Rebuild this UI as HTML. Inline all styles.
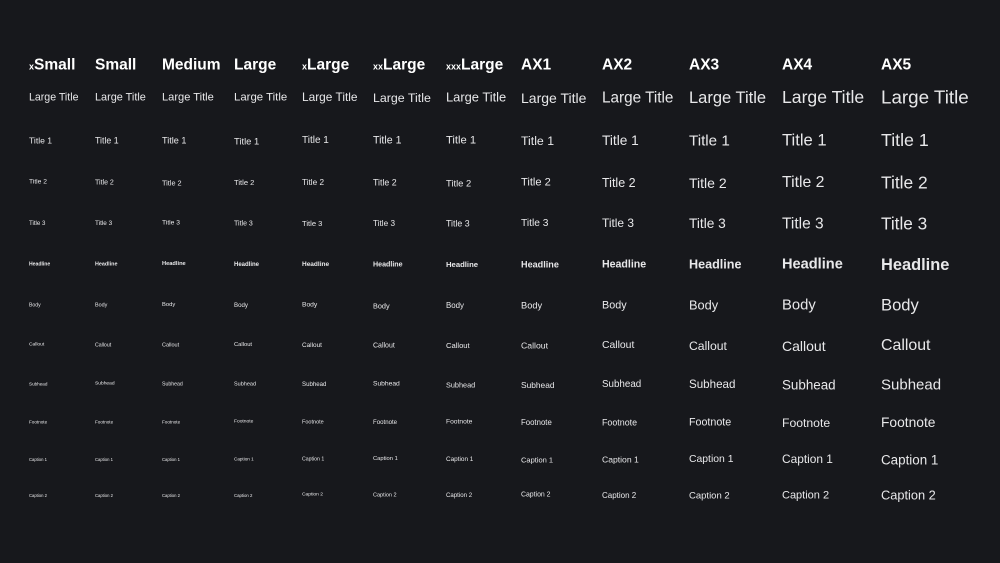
<!DOCTYPE html>
<html><head><meta charset="utf-8"><style>
html,body{margin:0;padding:0}
body{width:1000px;height:563px;background:#17181c;position:relative;overflow:hidden;font-family:"Liberation Sans",sans-serif;color:#e8e8ea}
.c{position:absolute;top:1px}
.c div{position:absolute;left:0;white-space:nowrap;line-height:1;transform:translateY(-50%)}
.h{top:64px;font-weight:bold;font-size:15.5px;color:#fff}
.h small{font-size:9px}
.r1{top:97px}.r2{top:140px}.r3{top:182px}.r4{top:223px}.r5{top:264px;font-weight:bold}.r6{top:305px}.r7{top:345px}.r8{top:384px}.r9{top:422px}.r10{top:459px}.r11{top:495px}
</style></head><body>
<div class="c" style="left:29px">
<div class="h"><small>x</small>Small</div>
<div class="r1" style="font-size:10.6px">Large Title</div>
<div class="r2" style="font-size:8.6px">Title 1</div>
<div class="r3" style="font-size:6.7px">Title 2</div>
<div class="r4" style="font-size:6.1px">Title 3</div>
<div class="r5" style="font-size:5.1px">Headline</div>
<div class="r6" style="font-size:5.1px">Body</div>
<div class="r7" style="font-size:4.9px">Callout</div>
<div class="r8" style="font-size:4.6px">Subhead</div>
<div class="r9" style="font-size:4.6px">Footnote</div>
<div class="r10" style="font-size:4.2px">Caption 1</div>
<div class="r11" style="font-size:4.2px">Caption 2</div>
</div>
<div class="c" style="left:95px">
<div class="h">Small</div>
<div class="r1" style="font-size:10.9px">Large Title</div>
<div class="r2" style="font-size:8.8px">Title 1</div>
<div class="r3" style="font-size:7px">Title 2</div>
<div class="r4" style="font-size:6.4px">Title 3</div>
<div class="r5" style="font-size:5.4px">Headline</div>
<div class="r6" style="font-size:5.4px">Body</div>
<div class="r7" style="font-size:5.2px">Callout</div>
<div class="r8" style="font-size:4.9px">Subhead</div>
<div class="r9" style="font-size:4.6px">Footnote</div>
<div class="r10" style="font-size:4.2px">Caption 1</div>
<div class="r11" style="font-size:4.2px">Caption 2</div>
</div>
<div class="c" style="left:162px">
<div class="h">Medium</div>
<div class="r1" style="font-size:11.1px">Large Title</div>
<div class="r2" style="font-size:9.1px">Title 1</div>
<div class="r3" style="font-size:7.3px">Title 2</div>
<div class="r4" style="font-size:6.7px">Title 3</div>
<div class="r5" style="font-size:5.7px">Headline</div>
<div class="r6" style="font-size:5.8px">Body</div>
<div class="r7" style="font-size:5.5px">Callout</div>
<div class="r8" style="font-size:5.2px">Subhead</div>
<div class="r9" style="font-size:4.6px">Footnote</div>
<div class="r10" style="font-size:4.2px">Caption 1</div>
<div class="r11" style="font-size:4.2px">Caption 2</div>
</div>
<div class="c" style="left:234px">
<div class="h">Large</div>
<div class="r1" style="font-size:11.4px">Large Title</div>
<div class="r2" style="font-size:9.4px">Title 1</div>
<div class="r3" style="font-size:7.6px">Title 2</div>
<div class="r4" style="font-size:7px">Title 3</div>
<div class="r5" style="font-size:6px">Headline</div>
<div class="r6" style="font-size:6.1px">Body</div>
<div class="r7" style="font-size:5.8px">Callout</div>
<div class="r8" style="font-size:5.5px">Subhead</div>
<div class="r9" style="font-size:4.9px">Footnote</div>
<div class="r10" style="font-size:4.6px">Caption 1</div>
<div class="r11" style="font-size:4.3px">Caption 2</div>
</div>
<div class="c" style="left:302px">
<div class="h"><small>x</small>Large</div>
<div class="r1" style="font-size:11.9px">Large Title</div>
<div class="r2" style="font-size:10px">Title 1</div>
<div class="r3" style="font-size:8.2px">Title 2</div>
<div class="r4" style="font-size:7.6px">Title 3</div>
<div class="r5" style="font-size:6.5px">Headline</div>
<div class="r6" style="font-size:6.7px">Body</div>
<div class="r7" style="font-size:6.4px">Callout</div>
<div class="r8" style="font-size:6.1px">Subhead</div>
<div class="r9" style="font-size:5.5px">Footnote</div>
<div class="r10" style="font-size:5.2px">Caption 1</div>
<div class="r11" style="font-size:4.9px">Caption 2</div>
</div>
<div class="c" style="left:373px">
<div class="h"><small>xx</small>Large</div>
<div class="r1" style="font-size:12.4px">Large Title</div>
<div class="r2" style="font-size:10.6px">Title 1</div>
<div class="r3" style="font-size:8.8px">Title 2</div>
<div class="r4" style="font-size:8.2px">Title 3</div>
<div class="r5" style="font-size:7.1px">Headline</div>
<div class="r6" style="font-size:7.3px">Body</div>
<div class="r7" style="font-size:7px">Callout</div>
<div class="r8" style="font-size:6.7px">Subhead</div>
<div class="r9" style="font-size:6.1px">Footnote</div>
<div class="r10" style="font-size:5.8px">Caption 1</div>
<div class="r11" style="font-size:5.5px">Caption 2</div>
</div>
<div class="c" style="left:446px">
<div class="h"><small>xxx</small>Large</div>
<div class="r1" style="font-size:12.9px">Large Title</div>
<div class="r2" style="font-size:11.2px">Title 1</div>
<div class="r3" style="font-size:9.4px">Title 2</div>
<div class="r4" style="font-size:8.8px">Title 3</div>
<div class="r5" style="font-size:7.7px">Headline</div>
<div class="r6" style="font-size:7.9px">Body</div>
<div class="r7" style="font-size:7.6px">Callout</div>
<div class="r8" style="font-size:7.3px">Subhead</div>
<div class="r9" style="font-size:6.7px">Footnote</div>
<div class="r10" style="font-size:6.4px">Caption 1</div>
<div class="r11" style="font-size:6.1px">Caption 2</div>
</div>
<div class="c" style="left:521px">
<div class="h">AX1</div>
<div class="r1" style="font-size:14px">Large Title</div>
<div class="r2" style="font-size:12.3px">Title 1</div>
<div class="r3" style="font-size:11.1px">Title 2</div>
<div class="r4" style="font-size:10.2px">Title 3</div>
<div class="r5" style="font-size:9.1px">Headline</div>
<div class="r6" style="font-size:9.3px">Body</div>
<div class="r7" style="font-size:8.7px">Callout</div>
<div class="r8" style="font-size:8.4px">Subhead</div>
<div class="r9" style="font-size:7.8px">Footnote</div>
<div class="r10" style="font-size:7.5px">Caption 1</div>
<div class="r11" style="font-size:6.9px">Caption 2</div>
</div>
<div class="c" style="left:602px">
<div class="h">AX2</div>
<div class="r1" style="font-size:15.3px">Large Title</div>
<div class="r2" style="font-size:13.7px">Title 1</div>
<div class="r3" style="font-size:12.5px">Title 2</div>
<div class="r4" style="font-size:11.9px">Title 3</div>
<div class="r5" style="font-size:10.6px">Headline</div>
<div class="r6" style="font-size:10.8px">Body</div>
<div class="r7" style="font-size:10.4px">Callout</div>
<div class="r8" style="font-size:9.8px">Subhead</div>
<div class="r9" style="font-size:8.9px">Footnote</div>
<div class="r10" style="font-size:8.6px">Caption 1</div>
<div class="r11" style="font-size:8px">Caption 2</div>
</div>
<div class="c" style="left:689px">
<div class="h">AX3</div>
<div class="r1" style="font-size:16.5px">Large Title</div>
<div class="r2" style="font-size:15.2px">Title 1</div>
<div class="r3" style="font-size:14px">Title 2</div>
<div class="r4" style="font-size:13.7px">Title 3</div>
<div class="r5" style="font-size:12.6px">Headline</div>
<div class="r6" style="font-size:12.8px">Body</div>
<div class="r7" style="font-size:12.2px">Callout</div>
<div class="r8" style="font-size:11.6px">Subhead</div>
<div class="r9" style="font-size:10.7px">Footnote</div>
<div class="r10" style="font-size:10.4px">Caption 1</div>
<div class="r11" style="font-size:9.5px">Caption 2</div>
</div>
<div class="c" style="left:782px">
<div class="h">AX4</div>
<div class="r1" style="font-size:17.6px">Large Title</div>
<div class="r2" style="font-size:16.6px">Title 1</div>
<div class="r3" style="font-size:15.8px">Title 2</div>
<div class="r4" style="font-size:15.5px">Title 3</div>
<div class="r5" style="font-size:14.6px">Headline</div>
<div class="r6" style="font-size:14.8px">Body</div>
<div class="r7" style="font-size:14px">Callout</div>
<div class="r8" style="font-size:13.4px">Subhead</div>
<div class="r9" style="font-size:12.2px">Footnote</div>
<div class="r10" style="font-size:11.9px">Caption 1</div>
<div class="r11" style="font-size:11px">Caption 2</div>
</div>
<div class="c" style="left:881px">
<div class="h">AX5</div>
<div class="r1" style="font-size:18.8px">Large Title</div>
<div class="r2" style="font-size:17.8px">Title 1</div>
<div class="r3" style="font-size:17.4px">Title 2</div>
<div class="r4" style="font-size:17.2px">Title 3</div>
<div class="r5" style="font-size:16.4px">Headline</div>
<div class="r6" style="font-size:16.6px">Body</div>
<div class="r7" style="font-size:15.9px">Callout</div>
<div class="r8" style="font-size:15px">Subhead</div>
<div class="r9" style="font-size:13.8px">Footnote</div>
<div class="r10" style="font-size:13.4px">Caption 1</div>
<div class="r11" style="font-size:12.8px">Caption 2</div>
</div>
</body></html>
